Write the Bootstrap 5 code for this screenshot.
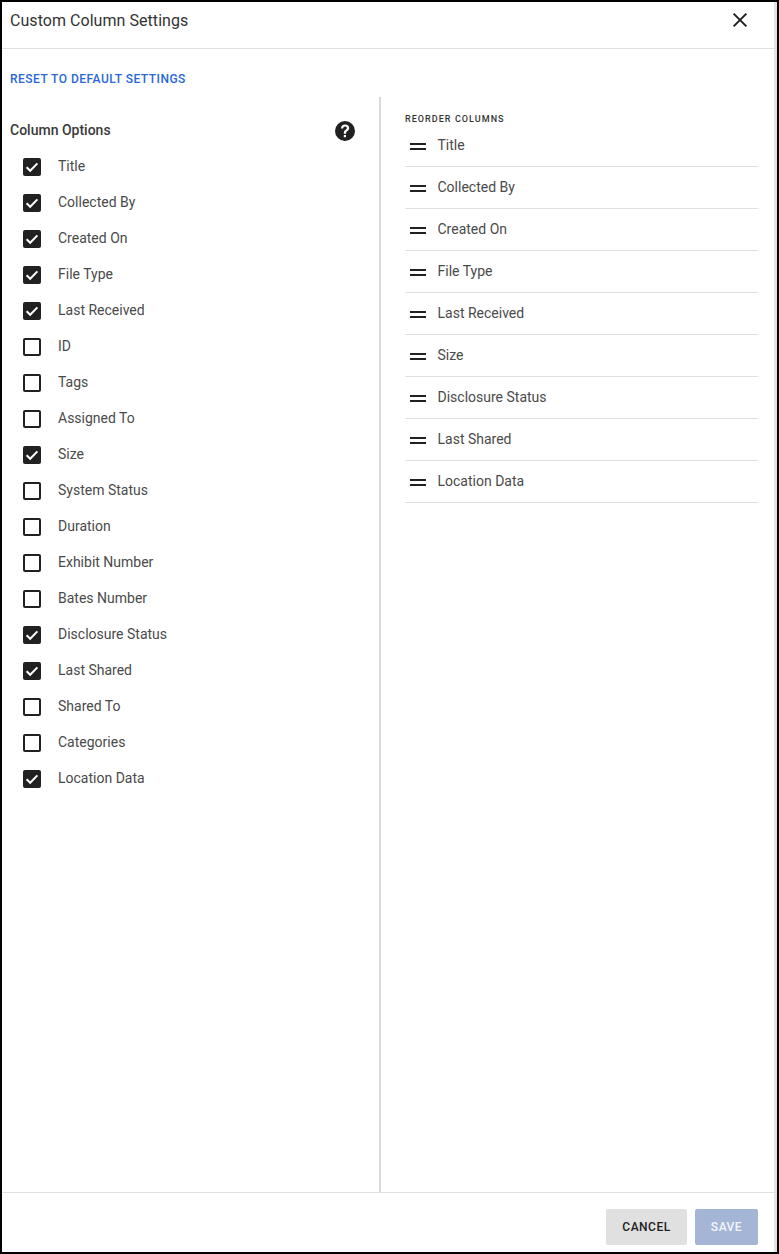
<!DOCTYPE html>
<html lang="en">
<head>
<meta charset="utf-8">
<title>Custom Column Settings</title>
<link href="https://cdn.jsdelivr.net/npm/bootstrap@5.3.0/dist/css/bootstrap.min.css" rel="stylesheet">
<style>
html, body { height: 100%; margin: 0; }
body { background: #000; font-family: Roboto, "Liberation Sans", sans-serif; color: #333; overflow: hidden; }
.frame { height: 1254px; width: 779px; padding: 2px; background: #000; }
.sheet { height: 1250px; background: #fff; border-right: 3px solid #eadfe0; display: flex; flex-direction: column; }
.dlg-head { height: 47px; border-bottom: 1px solid #e0e0e0; padding: 0 26px 0 8px; flex: none; }
.dlg-title { font-size: 16px; font-weight: 400; line-height: 20px; margin: 9px 0 0; color: #333; letter-spacing: .05px; }
.close-x { margin-top: 10px; display: block; background: none; border: 0; padding: 0; line-height: 0; }
.reset-row { height: 48px; padding: 23px 8px 0; flex: none; }
.reset-link { font-size: 12px; font-weight: 500; line-height: 14px; letter-spacing: .48px; color: #2a67d8; text-decoration: none; text-transform: uppercase; display: block; }
.body-cols { flex: 1 1 auto; min-height: 0; }
.opts { width: 377px; flex: none; padding: 23px 0 0 8px; }
.opts-head { height: 20px; width: 345px; margin-bottom: 8px; }
.opts-head svg { margin-top: 1px; }
.opts-title { font-size: 14px; font-weight: 500; line-height: 20px; margin: 0; color: #3a3a3a; }
.opt-row { height: 36px; padding-left: 13px; font-size: 14px; color: #4a4a4a; margin: 0; }
.tick { width: 18px; height: 18px; border-radius: 2px; border: 2px solid #212121; background: #fff; flex: none; margin: 2px 17px 0 0; display: flex; align-items: center; justify-content: center; }
.tick.on { background: #212121; }
.tick svg { display: none; }
.tick.on svg { display: block; }
.divider { width: 2px; background: #d9d9d9; flex: none; }
.order { flex: 1 1 auto; padding: 16px 16px 0 24px; min-width: 0; }
.order-title { font-size: 9px; font-weight: 500; letter-spacing: 1.05px; line-height: 12px; color: #333; margin: 0; text-transform: uppercase; }
.order-list { margin: 0; padding: 0; list-style: none; }
.order-item { height: 42px; border-bottom: 1px solid #e0e0e0; padding: 0 0 0 5px; font-size: 14px; color: #4a4a4a; }
.bars { width: 16px; border-top: 2px solid #212121; border-bottom: 2px solid #212121; flex: none; margin: 2px 11.5px 0 0; box-sizing: content-box; height: 3px; }
.dlg-foot { height: 60px; border-top: 1px solid #e0e0e0; padding: 16px 16px 0 0; flex: none; gap: 8px; }
.act { height: 36px; border: 0; border-radius: 2px; font-size: 12px; font-weight: 500; letter-spacing: .5px; padding: 0; text-transform: uppercase; }
.act-cancel { width: 81px; background: #e0e0e0; color: #212121; }
.act-save { width: 63px; background: #a4b5d6; color: #f4f6fa; }
</style>
</head>
<body>
<div class="frame">
  <div class="sheet" role="dialog" aria-label="Custom Column Settings">
    <div class="dlg-head d-flex justify-content-between align-items-start">
      <h1 class="dlg-title">Custom Column Settings</h1>
      <button class="close-x" type="button" aria-label="Close">
        <svg width="16" height="16" viewBox="0 0 16 16"><path d="M1.6 1.6 14.4 14.4M14.4 1.6 1.6 14.4" stroke="#212121" stroke-width="2" fill="none"/></svg>
      </button>
    </div>
    <div class="reset-row"><a class="reset-link" href="#">Reset to default settings</a></div>
    <div class="body-cols d-flex">
      <div class="opts">
        <div class="opts-head d-flex justify-content-between align-items-center">
          <h2 class="opts-title">Column Options</h2>
          <svg width="20" height="20" viewBox="0 0 20 20" aria-hidden="true"><circle cx="10" cy="10" r="10" fill="#212121"/><path d="M6 7.5C6.1 5.1 7.7 3.6 10.1 3.6c2.4 0 4.1 1.5 4.1 3.5 0 1.5-.8 2.3-1.8 3-1 .7-1.3 1.2-1.3 2.2v.4H8.8v-.6c0-1.5.5-2.3 1.5-3 .9-.6 1.6-1.1 1.6-2 0-1-.7-1.6-1.8-1.6-1.2 0-1.9.8-2 2zM8.8 14.1H11v2.2H8.8z" fill="#fff"/></svg>
        </div>
        <div id="opts"></div>
      </div>
      <div class="divider"></div>
      <div class="order">
        <p class="order-title">Reorder Columns</p>
        <ul class="order-list" id="order"></ul>
      </div>
    </div>
    <div class="dlg-foot d-flex justify-content-end">
      <button class="act act-cancel" type="button">Cancel</button>
      <button class="act act-save" type="button" disabled>Save</button>
    </div>
  </div>
</div>
<script>
var options = [["Title",1],["Collected By",1],["Created On",1],["File Type",1],["Last Received",1],["ID",0],["Tags",0],["Assigned To",0],["Size",1],["System Status",0],["Duration",0],["Exhibit Number",0],["Bates Number",0],["Disclosure Status",1],["Last Shared",1],["Shared To",0],["Categories",0],["Location Data",1]];
document.getElementById("opts").innerHTML = options.map(function(o){
  return '<label class="opt-row d-flex align-items-center"><span class="tick'+(o[1]?' on':'')+'"><svg width="14" height="14" viewBox="0 0 14 14"><path d="M1.6 7.2 5.2 10.8 12.4 3.4" stroke="#fff" stroke-width="2" fill="none"/></svg></span>'+o[0]+'</label>';
}).join("");
document.getElementById("order").innerHTML = options.filter(function(o){return o[1];}).map(function(o){
  return '<li class="order-item d-flex align-items-center"><span class="bars"></span>'+o[0]+'</li>';
}).join("");
</script>
<script src="https://cdn.jsdelivr.net/npm/bootstrap@5.3.0/dist/js/bootstrap.bundle.min.js"></script>
</body>
</html>
